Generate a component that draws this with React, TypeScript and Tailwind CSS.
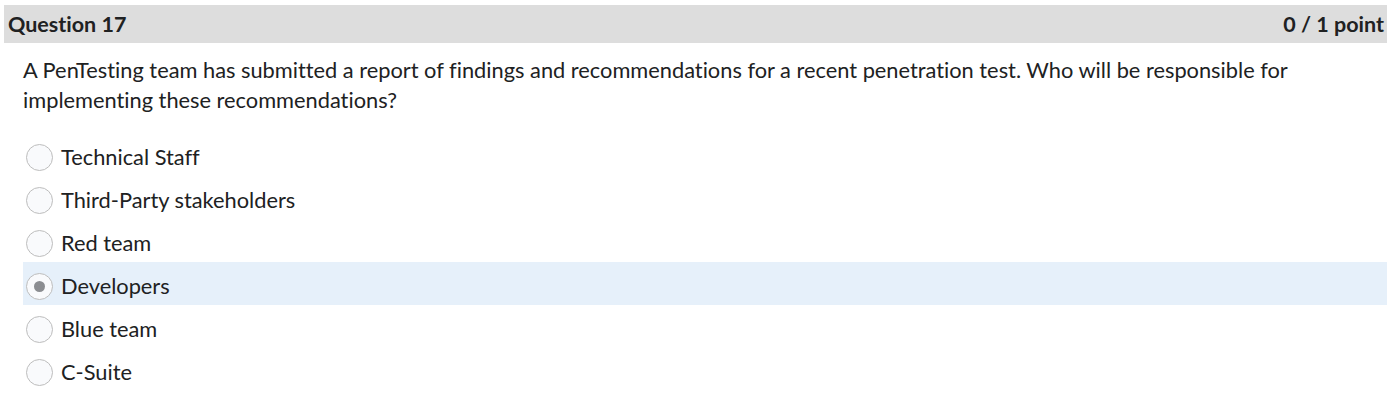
import React from "react";

const options = [
  "Technical Staff",
  "Third-Party stakeholders",
  "Red team",
  "Developers",
  "Blue team",
  "C-Suite",
];

function Radio({ checked }: { checked: boolean }) {
  return (
    <span className="flex h-[27px] w-[27px] shrink-0 items-center justify-center rounded-full border border-[#bdbdbd] bg-[#f9fafc]">
      {checked && <span className="h-[11px] w-[11px] rounded-full bg-[#8b8d91]" />}
    </span>
  );
}

export default function App() {
  return (
    <div className="min-h-[411px] bg-white pl-[4px] pr-[5px] pt-[5px] text-[#202122] [font-family:Lato,'Liberation_Sans',sans-serif] [font-variant-ligatures:none]">
      <div className="flex h-[38px] items-center justify-between bg-[#dddddd] pl-[4px] pr-[3px] text-[21.5px] font-bold">
        <span>Question 17</span>
        <span>0 / 1 point</span>
      </div>
      <div className="pl-[19px]">
        <p className="mt-[12px] text-[21.8px] leading-[30px]">
          A PenTesting team has submitted a report of findings and recommendations for a recent penetration test. Who will be responsible for implementing these recommendations?
        </p>
        <div className="mt-[18px] flex flex-col">
          {options.map((o) => {
            const sel = o === "Developers";
            return (
              <div
                key={o}
                className={`flex h-[43px] items-center gap-[8px] pl-[3px] pt-[5px] text-[21.8px] ${sel ? "bg-[#e6f0fa]" : ""}`}
              >
                <Radio checked={sel} />
                <span className="leading-[30px]">{o}</span>
              </div>
            );
          })}
        </div>
      </div>
    </div>
  );
}
